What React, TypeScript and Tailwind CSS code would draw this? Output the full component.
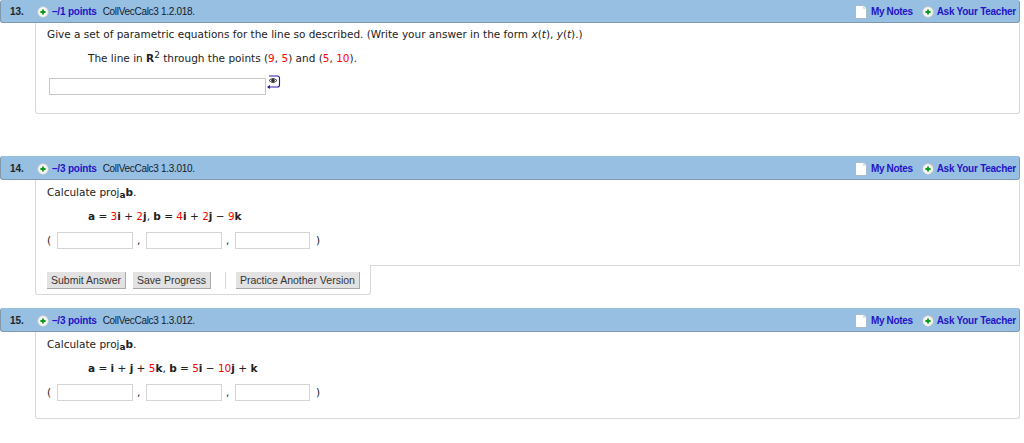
import React from "react";

const R = ({ children }: { children: React.ReactNode }) => <span className="text-[#f00]">{children}</span>;
const B = ({ children }: { children: React.ReactNode }) => <b className="font-bold">{children}</b>;

function Plus() {
  return (
    <svg width="12" height="12" viewBox="0 0 12 12" className="shrink-0">
      <circle cx="6" cy="6" r="5.4" fill="#f4f4f0" stroke="#b9c4cc" strokeWidth="0.7" />
      <path d="M6 3.4v5.2M3.4 6h5.2" stroke="#0a9a1e" strokeWidth="1.8" />
    </svg>
  );
}

function Note() {
  return (
    <svg width="12" height="14" viewBox="0 0 12 14" className="shrink-0">
      <path d="M.5.5h8l3 3v10H.5z" fill="#fff" stroke="#9fb2c2" strokeWidth="0.8" />
      <path d="M8.5.5v3h3" fill="#e8eef3" stroke="#c4d0da" strokeWidth="0.6" />
    </svg>
  );
}

function Header({ num, pts, code, h }: { num: string; pts: string; code: string; h: string }) {
  return (
    <div className={`${h} flex items-center rounded-[3px] border-b border-l border-r border-[#7f98ad] bg-[#97bfe2] pr-[3px] text-[10px] leading-none font-['Liberation_Sans',sans-serif]`}>
      <span className="ml-[9px] w-[27px] font-bold text-[#1a2530]">{num}</span>
      <Plus />
      <span className="ml-[3px] font-bold tracking-[-0.2px] text-[#2413c8]">{pts}</span>
      <span className="ml-[6px] tracking-[-0.3px] text-[#14202c]">{code}</span>
      <span className="ml-auto flex items-center">
        <Note />
        <span className="ml-[4px] font-bold tracking-[-0.35px] text-[#2413c8]">My Notes</span>
        <span className="ml-[9px]"><Plus /></span>
        <span className="ml-[3px] font-bold tracking-[-0.25px] text-[#2413c8]">Ask Your Teacher</span>
      </span>
    </div>
  );
}

function Triple() {
  return (
    <div className="ml-[12px] flex h-[16px] items-center">
      <span className="w-[10px]">(</span>
      <span className="h-[17px] w-[76px] border border-[#d4d4d4] bg-white" />
      <span className="w-[13px] pl-[4px]">,</span>
      <span className="h-[17px] w-[76px] border border-[#d4d4d4] bg-white" />
      <span className="w-[13px] pl-[4px]">,</span>
      <span className="h-[17px] w-[75px] border border-[#d4d4d4] bg-white" />
      <span className="ml-[6px]">)</span>
    </div>
  );
}

function Btn({ children }: { children: React.ReactNode }) {
  return (
    <span className="flex h-[17px] items-center border-r border-b border-[#a9a9a9] bg-[#e2e2e2] px-[4px] text-[10.5px] whitespace-nowrap text-[#333] font-['Liberation_Sans',sans-serif]">
      {children}
    </span>
  );
}

export default function App() {
  return (
    <div className="h-[443px] w-[1024px] overflow-hidden bg-white pr-[4px] text-[10.5px] leading-[14px] text-[#222] font-['DejaVu_Sans',sans-serif]">
      <Header num="13." pts="–/1 points" code="CollVecCalc3 1.2.018." h="h-[23px] pt-[1px]" />
      <div className="ml-[35px] h-[91px] rounded-b-[3px] border-r border-b border-l border-[#d8d8d8] pt-[4px] pl-[11px]">
        <p>Give a set of parametric equations for the line so described. (Write your answer in the form <i>x</i>(<i>t</i>), <i>y</i>(<i>t</i>).)</p>
        <p className="mt-[10px] ml-[41px]">The line in <B>R</B><sup className="text-[9px] leading-none">2</sup> through the points (<R>9</R>, <R>5</R>) and (<R>5</R>, <R>10</R>).</p>
        <div className="mt-[13px] ml-[2px] flex items-start">
          <span className="h-[17px] w-[217px] border border-[#c8c8c8] bg-white" />
          <svg width="15" height="15" viewBox="0 0 15 15" className="-mt-[3px]">
            <path d="M3 1h8.5q2 0 2 2v7q0 2-2 2H2" fill="none" stroke="#2a1aa8" strokeWidth="1.1" />
            <path d="M4 10l-3 2 3 2z" fill="#2a1aa8" />
            <path d="M3 5.5q4-4 8 0q-4 4-8 0z" fill="#fff" stroke="#333" strokeWidth="0.9" />
            <circle cx="7" cy="5.5" r="1.8" fill="#333" />
          </svg>
        </div>
      </div>

      <div className="mt-[42px]">
        <Header num="14." pts="–/3 points" code="CollVecCalc3 1.3.010." h="h-[24px] pt-[2px]" />
        <div className="ml-[35px] h-[85px] border-r border-l border-[#d8d8d8] pt-[5px] pl-[11px]">
          <p>Calculate proj<sub className="text-[9px] leading-none font-bold">a</sub><B>b</B>.</p>
          <p className="mt-[10px] ml-[41px]"><B>a</B> = <R>3</R><B>i</B> + <R>2</R><B>j</B>, <B>b</B> = <R>4</R><B>i</B> + <R>2</R><B>j</B> − <R>9</R><B>k</B></p>
          <div className="mt-[9px] -ml-[12px]"><Triple /></div>
        </div>
        <div className="ml-[35px] flex h-[30px]">
          <div className="flex h-[30px] w-[336px] items-start rounded-b-[3px] border-r border-b border-l border-[#d8d8d8] pt-[7px] pl-[11px]">
            <Btn>Submit Answer</Btn>
            <span className="ml-[7px]"><Btn>Save Progress</Btn></span>
            <span className="ml-[14px] h-[17px] w-px bg-[#d8d8d8]" />
            <span className="ml-[10px]"><Btn>Practice Another Version</Btn></span>
          </div>
          <div className="h-px flex-1 bg-[#d8d8d8]" />
        </div>
      </div>

      <div className="mt-[13px]">
        <Header num="15." pts="–/3 points" code="CollVecCalc3 1.3.012." h="h-[24px] pt-[2px]" />
        <div className="ml-[35px] h-[87px] rounded-b-[3px] border-r border-b border-l border-[#d8d8d8] pt-[5px] pl-[11px]">
          <p>Calculate proj<sub className="text-[9px] leading-none font-bold">a</sub><B>b</B>.</p>
          <p className="mt-[10px] ml-[41px]"><B>a</B> = <B>i</B> + <B>j</B> + <R>5</R><B>k</B>, <B>b</B> = <R>5</R><B>i</B> − <R>10</R><B>j</B> + <B>k</B></p>
          <div className="mt-[9px] -ml-[12px]"><Triple /></div>
        </div>
      </div>
    </div>
  );
}
